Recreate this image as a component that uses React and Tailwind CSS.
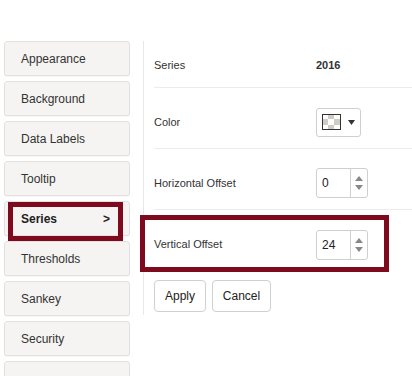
import React from "react";

const navItems = ["Appearance", "Background", "Data Labels", "Tooltip", "Series", "Thresholds", "Sankey", "Security", ""];

function Spinner({ value }) {
  return (
    <div className="flex h-[30px] w-[52px] rounded-[3px] border border-[#cfcfcf] bg-white">
      <div className="flex flex-1 items-center pl-[5px] text-[12px] text-[#222]">{value}</div>
      <div className="flex w-[17px] flex-col items-center justify-between border-l border-[#cfcfcf] py-[7px]">
        <svg width="8" height="5" viewBox="0 0 8 5"><path d="M0 5 L4 0 L8 5 Z" fill="#888" /></svg>
        <svg width="8" height="5" viewBox="0 0 8 5"><path d="M0 0 L4 5 L8 0 Z" fill="#888" /></svg>
      </div>
    </div>
  );
}

function Row({ label, children, className }) {
  return (
    <div className={"flex items-center border-b border-[#ececec] " + className}>
      <div className="w-[162px] text-[11px] text-[#333]">{label}</div>
      <div className="flex items-center">{children}</div>
    </div>
  );
}

export default function App() {
  return (
    <div
      className="relative h-[376px] w-[412px] overflow-hidden bg-white"
      style={{ fontFamily: '"Liberation Sans", Arial, sans-serif' }}
    >
      <div className="flex">
        <div className="w-[143px] shrink-0 pl-[4px] pt-[41px]">
          {navItems.map((item, i) => (
            <div
              key={i}
              className="mb-[5px] flex h-[35px] w-[126px] items-center justify-between rounded-[3px] border border-[#e2e1df] bg-[#f5f4f2] pl-[16px] pr-[19px] text-[12px] text-[#333] shadow-[0_1px_1px_rgba(0,0,0,0.04)]"
            >
              <span className={item === "Series" ? "font-bold text-[#222]" : ""}>{item}</span>
              {item === "Series" && <span className="font-bold text-[#222]">&gt;</span>}
            </div>
          ))}
        </div>
        <div className="mt-[41px] h-[274px] flex-1 border-l border-[#e8e8e8] pl-[10px]">
          <Row label="Series" className="h-[47px] pt-[3px]">
            <span className="text-[11px] font-bold text-[#333]">2016</span>
          </Row>
          <Row label="Color" className="h-[61px] pt-[8px]">
            <div className="flex h-[29px] w-[45px] items-center rounded-[3px] border border-[#cfcfcf] bg-white pl-[5px]">
              <svg width="19" height="16" viewBox="0 0 19 16" className="block">
                <rect x="0" y="0" width="19" height="16" fill="#fff" />
                <rect x="6" y="0" width="6" height="5" fill="#cfcbc5" />
                <rect x="0" y="5" width="6" height="6" fill="#cfcbc5" />
                <rect x="12" y="5" width="7" height="6" fill="#cfcbc5" />
                <rect x="6" y="11" width="6" height="5" fill="#cfcbc5" />
                <rect x="0.5" y="0.5" width="18" height="15" fill="none" stroke="#333" />
              </svg>
              <svg width="7" height="5" viewBox="0 0 7 5" className="ml-[7px]"><path d="M0 0 L7 0 L3.5 5 Z" fill="#333" /></svg>
            </div>
          </Row>
          <Row label="Horizontal Offset" className="h-[61px] pt-[8px]">
            <Spinner value="0" />
          </Row>
          <Row label="Vertical Offset" className="h-[61px] border-b-0 pt-[8px]">
            <Spinner value="24" />
          </Row>
          <div className="mt-[9px] flex gap-[6px]">
            <button className="h-[32px] w-[52px] rounded-[4px] border border-[#d0d0d0] bg-white text-[12px] text-[#222]">Apply</button>
            <button className="h-[32px] w-[59px] rounded-[4px] border border-[#d0d0d0] bg-white text-[12px] text-[#222]">Cancel</button>
          </div>
        </div>
      </div>
      <div className="pointer-events-none absolute left-[8px] top-[202px] h-[39px] w-[115px] border-[5px] border-[#7e0a1e]" />
      <div className="pointer-events-none absolute left-[140px] top-[215px] h-[57px] w-[249px] border-[5px] border-[#7e0a1e]" />
    </div>
  );
}
